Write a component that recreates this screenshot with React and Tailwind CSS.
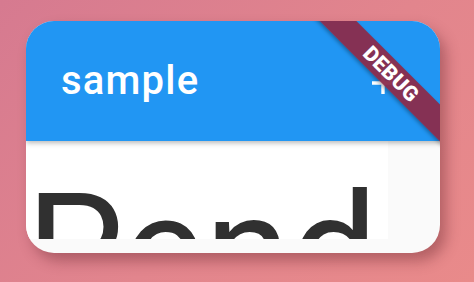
import React from "react";

const DebugBanner = () => (
  <div className="absolute left-[250px] top-[40px] w-[230px] h-[26px] rotate-45 bg-[#8b2b4b]/95 shadow-[0_2px_4px_rgba(0,0,0,0.3)] flex items-center justify-center z-20">
    <span className="text-white text-[21px] font-black leading-none tracking-[0.3px] [font-family:Roboto,sans-serif]">DEBUG</span>
  </div>
);

const App = () => {
  return (
    <div className="w-[474px] h-[282px] overflow-hidden bg-[linear-gradient(135deg,#d67a90_0%,#e2858d_55%,#e98a8a_100%)] pl-[26px] pt-[21px]">
      <div className="relative w-[414px] h-[232px] rounded-[28px] overflow-hidden bg-[#fafafa] shadow-[6px_8px_14px_rgba(80,20,30,0.35)] flex flex-col">
        {/* App bar */}
        <div className="relative z-10 h-[120px] bg-[#2196f3] shadow-[0_2px_5px_rgba(0,0,0,0.28)] flex items-center pl-[35px]">
          <span className="text-white text-[40px] font-medium [font-family:Roboto,sans-serif] tracking-[1.2px]">sample</span>
          <svg className="absolute left-[344px] top-[49px]" width="26" height="26" viewBox="0 0 26 26">
            <path d="M13 2v22M2 13h22" stroke="#fff" strokeWidth="3.4" />
          </svg>
        </div>

        {/* Body */}
        <div className="flex-1">
          <div className="w-[362px] h-[98px] bg-white overflow-hidden">
            <div className="mt-[33px] text-[155px] leading-none text-[#303030] whitespace-nowrap [font-family:Roboto,sans-serif]">Pend</div>
          </div>
        </div>

        <DebugBanner />
      </div>
    </div>
  );
};

export default App;
